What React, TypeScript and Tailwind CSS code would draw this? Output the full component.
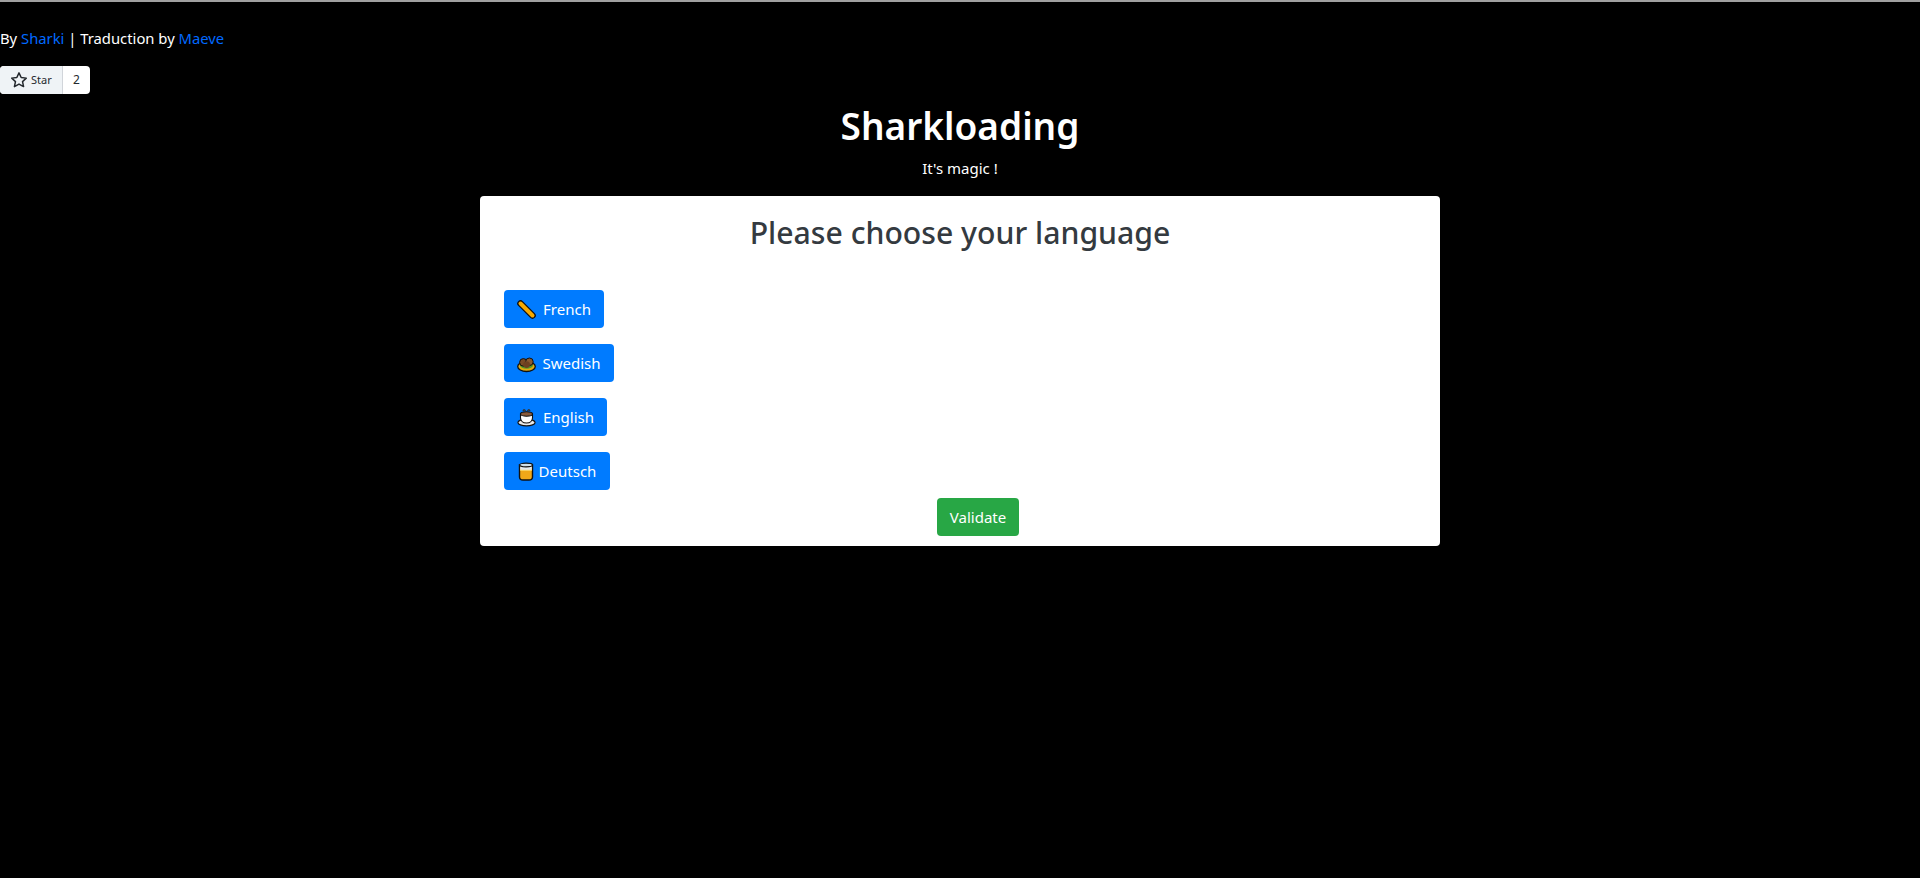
import React from "react";

const font = "font-['Noto_Sans','Open_Sans',sans-serif]";

const Baguette = () => (
  <svg width="19" height="19" viewBox="0 0 19 19" className="shrink-0">
    <path d="M3.5 3.5 L15.5 15.5" stroke="#111" strokeWidth="6.6" strokeLinecap="round" />
    <path d="M3.5 3.5 L15.5 15.5" stroke="#f5a800" strokeWidth="4" strokeLinecap="round" />
  </svg>
);

const Meatballs = () => (
  <svg width="19" height="19" viewBox="0 0 19 19" className="shrink-0">
    <ellipse cx="9.5" cy="12.5" rx="8.8" ry="5" fill="#e0a810" stroke="#111" strokeWidth="1.3" />
    <ellipse cx="9.5" cy="11.5" rx="6.4" ry="3.2" fill="#4f9a2c" />
    <circle cx="6.4" cy="8.4" r="3.8" fill="#7a4a24" stroke="#111" strokeWidth="1" />
    <circle cx="12.4" cy="7.8" r="3.8" fill="#8a5a30" stroke="#111" strokeWidth="1" />
    <circle cx="9.6" cy="10.6" r="3.4" fill="#6d4020" />
  </svg>
);

const Tea = () => (
  <svg width="19" height="19" viewBox="0 0 19 19" className="shrink-0">
    <path d="M6 3 Q7 0.5 8.5 3 M10.5 3 Q12 0.5 13 3" stroke="#333" strokeWidth="1.4" fill="none" />
    <ellipse cx="9.5" cy="14.5" rx="8.6" ry="3.4" fill="#e8e8e8" stroke="#111" strokeWidth="1.2" />
    <path d="M3.5 6 H15.5 V10 Q15 15 9.5 15 Q4 15 3.5 10 Z" fill="#ffffff" stroke="#111" strokeWidth="1.1" />
    <ellipse cx="9.5" cy="6" rx="6" ry="2.2" fill="#8a5a3a" stroke="#111" strokeWidth="1.1" />
  </svg>
);

const Beer = () => (
  <svg width="16" height="19" viewBox="0 0 16 19" className="shrink-0">
    <path d="M1.5 3 H14.5 V15 Q14.5 18 11 18 H5 Q1.5 18 1.5 15 Z" fill="#f0a818" stroke="#111" strokeWidth="1.4" />
    <path d="M2.2 3.4 H13.8 V8 H2.2 Z" fill="#e4eaee" />
    <path d="M2.2 8.4 H13.8" stroke="#f8d060" strokeWidth="1.2" />
    <ellipse cx="8" cy="3" rx="6.5" ry="1.8" fill="#cfe0ea" stroke="#111" strokeWidth="1.2" />
  </svg>
);

const languages = [
  { key: "fr", label: "French", icon: <Baguette />, width: "w-[100px]", gap: "gap-[7px]" },
  { key: "sv", label: "Swedish", icon: <Meatballs />, width: "w-[110px]", gap: "gap-[6px]" },
  { key: "en", label: "English", icon: <Tea />, width: "w-[103px]", gap: "gap-[7px]" },
  { key: "de", label: "Deutsch", icon: <Beer />, width: "w-[106px]", gap: "gap-[5px]" },
];

export default function App() {
  return (
    <div className={`min-h-[878px] bg-black text-white text-[15px] ${font}`}>
      <div className="h-[2px] bg-[#a0a0a0]" />
      <p className="pt-[24px] h-[64px] leading-[24px] text-[14.8px]">
        By <a className="text-[#0069ff]">Sharki</a> | Traduction by{" "}
        <a className="text-[#0069ff]">Maeve</a>
      </p>

      <div className="flex w-[90px] h-[28px] bg-white rounded-[4px] text-[11px] text-[#24292e] overflow-hidden">
        <div className="flex items-center gap-[3px] w-[63px] pl-[10px] bg-[#eff3f6] border-r border-[#d1d5da]">
          <svg width="18" height="18" viewBox="0 0 24 24" fill="none" stroke="#24292e" strokeWidth="2" strokeLinejoin="round">
            <path d="M12 2.5l2.9 6.2 6.8.8-5 4.6 1.4 6.7L12 17.4l-6.1 3.4 1.4-6.7-5-4.6 6.8-.8z" />
          </svg>
          Star
        </div>
        <div className="flex-1 flex items-center justify-center text-[12px]">2</div>
      </div>

      <h1 className="mt-[8px] text-center text-[37px] leading-[48px] font-semibold">Sharkloading</h1>
      <p className="mt-[6px] text-center text-[15px] leading-[24px]">It's magic !</p>

      <div className="mt-[16px] mx-auto w-[960px] h-[350px] bg-white rounded-[4px] px-[24px] pt-[13px] text-[#343a40]">
        <h2 className="text-center text-[30.2px] leading-[48px] font-medium">Please choose your language</h2>
        <div className="mt-[33px] flex flex-col gap-[16px] items-start">
          {languages.map((lang) => (
            <button
              key={lang.key}
              className={`flex items-center justify-center h-[38px] rounded-[4px] bg-[#007bff] text-white text-[15px] ${lang.width} ${lang.gap}`}
            >
              {lang.icon}
              {lang.label}
            </button>
          ))}
        </div>
        <div className="mt-[8px] flex">
          <button className="ml-[433px] h-[38px] w-[82px] rounded-[4px] bg-[#28a745] text-white text-[15px]">Validate</button>
        </div>
      </div>
    </div>
  );
}
